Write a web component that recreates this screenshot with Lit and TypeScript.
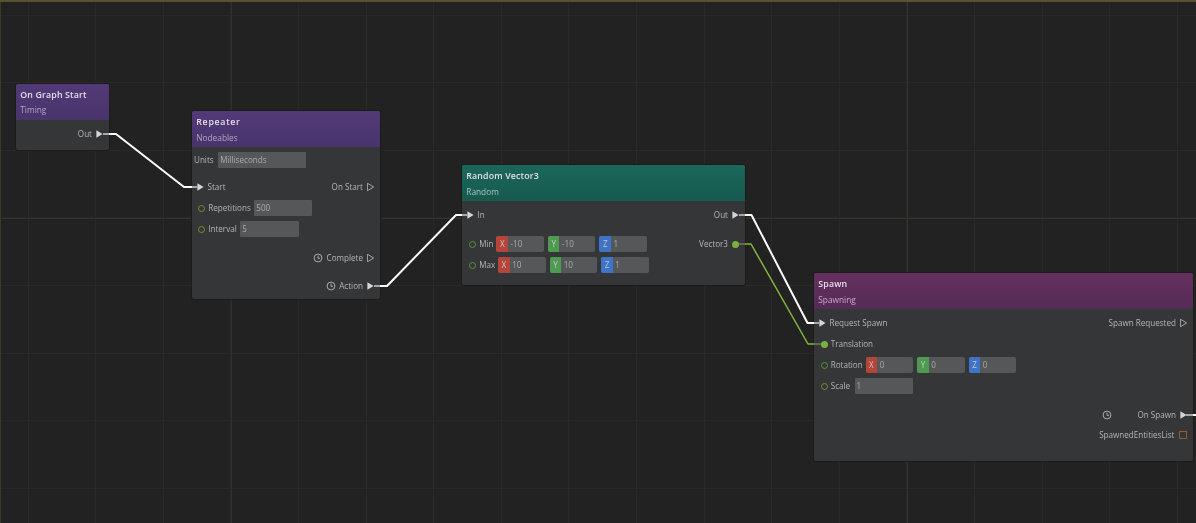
import { LitElement, html, css, svg } from "lit";

type Vec = { a: string; b: string; c: string };

const clock = html`<svg class="clock" viewBox="0 0 10 10"><circle cx="5" cy="5" r="3.9"></circle><path d="M5 2.7V5.3H7"></path></svg>`;
const tri = (filled: boolean) => html`<svg class="tri" viewBox="0 0 7 8"><path class=${filled ? "solid" : "hollow"} d="M.4 .2 6.6 4 .4 7.8Z"></path></svg>`;
const dot = (kind: string) => html`<span class="dot ${kind}"></span>`;
const field = (cls: string, value: string) => html`<span class="input ${cls}">${value}</span>`;
const vec = (v: Vec) => html`<span class="vec">
  <span class="comp"><b class="x">X</b><i>${v.a}</i></span>
  <span class="comp"><b class="y">Y</b><i>${v.b}</i></span>
  <span class="comp"><b class="z">Z</b><i>${v.c}</i></span>
</span>`;

class AppRoot extends LitElement {
  static styles = css`
    :host { display: block; width: 1196px; height: 523px; overflow: hidden; font-family: "Open Sans", "Noto Sans", sans-serif; }
    .canvas {
      position: relative; width: 1196px; height: 523px; overflow: hidden;
      background-color: #222222;
      background-image:
        linear-gradient(#57532c, #57532c),
        linear-gradient(#3c3b26, #3c3b26),
        linear-gradient(#2f302a, #2f302a),
        linear-gradient(#34342a, #34342a),
        linear-gradient(#34342a, #34342a),
        repeating-linear-gradient(90deg, transparent 0 27.6px, #292929 27.6px 28.6px, transparent 28.6px 67.6px),
        repeating-linear-gradient(180deg, transparent 0 14.6px, #292929 14.6px 15.6px, transparent 15.6px 67.6px);
      background-repeat: no-repeat, no-repeat, no-repeat, no-repeat, no-repeat, repeat, repeat;
      background-size: 100% 2px, 1px 100%, 1px 100%, 1px 100%, 100% 1px, auto, auto;
      background-position: 0 0, 0 0, 231px 0, 907px 0, 0 218px, 0 0, 0 0;
    }
    .node {
      position: absolute; box-sizing: border-box; display: flex; flex-direction: column;
      background: #343638; border-radius: 2px; box-shadow: 0 0 0 1px #1c1c1c;
      color: #b4b6b6; font-size: 8.1px; line-height: 12px;
    }
    .head { height: 36px; box-sizing: border-box; padding: 5px 4.3px 0; display: flex; flex-direction: column; gap: 4px; border-radius: 2px 2px 0 0; flex: none; }
    .n1 .head { gap: 3px; }
    .head strong { font-weight: 600; font-size: 8.8px; letter-spacing: .15px; line-height: 12px; color: #e4dfe8; white-space: nowrap; filter: blur(.25px); }
    .head strong.loose { letter-spacing: .7px; }
    .head small { font-size: 8.3px; line-height: 12px; white-space: nowrap; filter: blur(.25px); }
    .purple { background: linear-gradient(#523a78, #49346c); }
    .purple small { color: #b0a8c2; }
    .teal { background: linear-gradient(#1b675a, #16594f); }
    .teal small { color: #a8c4be; }
    .magenta { background: linear-gradient(#65305f, #552b56); }
    .magenta small { color: #c8aac4; }
    .body { flex: 1; display: flex; flex-direction: column; padding-top: 3.5px; filter: blur(.25px); }
    .row { height: 21px; display: flex; align-items: center; white-space: nowrap; flex: none; }
    .row.right { justify-content: flex-end; padding-right: 6px; }
    .row.left { padding-left: 5px; }
    .row.data { padding-left: 6px; }
    .row.plain { padding-left: 2px; }
    .row.gap { margin-top: 8px; }
    .row.gap7 { margin-top: 7px; }
    .row.small-gap { margin-top: 6px; }
    .row.tight { margin-top: -1px; }
    .row.split { justify-content: space-between; }
    .row.split > span { display: flex; align-items: center; }
    .label-l { margin-left: 3.5px; }
    .label-d { margin-left: 3.2px; }
    .label-r { margin-right: 4px; }
    .wide { margin-right: 22px; display: flex; }
    .units { margin-top: -1px; }
    .units .input { margin-left: 4.5px; }
    .dot { width: 5px; height: 5px; border-radius: 50%; border: 1px solid #86882c; flex: none; }
    .dot.green { border-color: #5f8f3a; }
    .dot.solid { width: 7px; height: 7px; border: 0; background: #7cb03e; }
    .dot.solid-r { width: 7px; height: 7px; border: 0; background: #7cb03e; margin-right: 0; }
    .tri { width: 7px; height: 8px; flex: none; }
    .solid { fill: #d6d6d6; }
    .hollow { fill: none; stroke: #b4b6b6; stroke-width: .9; }
    .clock { width: 10px; height: 10px; flex: none; margin-right: 3.5px; fill: none; stroke: #b8baba; stroke-width: .9; }
    .square { width: 6px; height: 6px; border: 1px solid #8f5c30; flex: none; margin-right: .5px; }
    .input { height: 16px; box-sizing: border-box; display: block; background: #565758; border-radius: 1px; color: #a9abab; padding: 2px 2px; line-height: 12px; margin-left: 3.5px; flex: none; }
    .n4 .input { margin-left: 4.5px; }
    .w88 { width: 88px; }
    .w58 { width: 58px; }
    .w59 { width: 59px; }
    .vec { display: flex; gap: 4px; margin-left: 3px; }
    .comp { width: 47.5px; height: 16px; display: flex; background: #565758; border-radius: 2px; overflow: hidden; flex: none; }
    .comp b { width: 11.5px; font-weight: 400; text-align: center; line-height: 16px; color: #c4c4c4; flex: none; }
    .comp i { font-style: normal; color: #a9abab; line-height: 16px; padding-left: 2.5px; }
    .x { background: #b5453a; }
    .y { background: #4d9a50; }
    .z { background: #3d74c8; }
    .wires { position: absolute; inset: 0; width: 1196px; height: 523px; pointer-events: none; }
    .wires path { fill: none; stroke-linejoin: round; }
    .white { stroke: #fbfbfb; stroke-width: 2; }
    .lime { stroke: #84b63c; stroke-width: 1.5; }
    .stub { stroke: #a6a8a8; stroke-width: 2; }
    .stub-g { stroke: #6f7f58; stroke-width: 1.5; }
    .n1 { left: 16px; top: 84px; width: 93px; height: 66px; }
    .n2 { left: 192px; top: 111px; width: 188px; height: 188px; }
    .n3 { left: 462px; top: 165px; width: 283px; height: 120px; }
    .n4 { left: 814px; top: 273px; width: 379px; height: 188px; }
    .n3 .row.data { padding-left: 7px; }
    .n4 .row.data { padding-left: 6.5px; }
  `;

  render() {
    return html`<div class="canvas">
      <section class="node n1">
        <header class="head purple"><strong>On Graph Start</strong><small>Timing</small></header>
        <div class="body"><div class="row right"><span class="label-r">Out</span>${tri(true)}</div></div>
      </section>

      <section class="node n2">
        <header class="head purple"><strong class="loose">Repeater</strong><small>Nodeables</small></header>
        <div class="body">
          <div class="row plain units"><span>Units</span>${field("w88", "Milliseconds")}</div>
          <div class="row left split right small-gap">
            <span>${tri(true)}<span class="label-l">Start</span></span>
            <span><span class="label-r">On Start</span>${tri(false)}</span>
          </div>
          <div class="row data">${dot("")}<span class="label-d">Repetitions</span>${field("w58", "500")}</div>
          <div class="row data">${dot("")}<span class="label-d">Interval</span>${field("w59", "5")}</div>
          <div class="row right gap">${clock}<span class="label-r">Complete</span>${tri(false)}</div>
          <div class="row right gap7">${clock}<span class="label-r">Action</span>${tri(true)}</div>
        </div>
      </section>

      <section class="node n3">
        <header class="head teal"><strong>Random Vector3</strong><small>Random</small></header>
        <div class="body">
          <div class="row left split right">
            <span>${tri(true)}<span class="label-l">In</span></span>
            <span><span class="label-r">Out</span>${tri(true)}</span>
          </div>
          <div class="row data split right gap">
            <span>${dot("green")}<span class="label-d">Min</span>${vec({ a: "-10", b: "-10", c: "1" })}</span>
            <span><span class="label-r">Vector3</span>${dot("solid-r")}</span>
          </div>
          <div class="row data">${dot("green")}<span class="label-d">Max</span>${vec({ a: "10", b: "10", c: "1" })}</div>
        </div>
      </section>

      <section class="node n4">
        <header class="head magenta"><strong>Spawn</strong><small>Spawning</small></header>
        <div class="body">
          <div class="row left split right">
            <span>${tri(true)}<span class="label-l">Request Spawn</span></span>
            <span><span class="label-r">Spawn Requested</span>${tri(false)}</span>
          </div>
          <div class="row data">${dot("solid")}<span class="label-d">Translation</span></div>
          <div class="row data">${dot("green")}<span class="label-d">Rotation</span>${vec({ a: "0", b: "0", c: "0" })}</div>
          <div class="row data">${dot("")}<span class="label-d">Scale</span>${field("w58", "1")}</div>
          <div class="row right gap"><span class="wide">${clock}</span><span class="label-r">On Spawn</span>${tri(true)}</div>
          <div class="row right tight"><span class="label-r">SpawnedEntitiesList</span><span class="square"></span></div>
        </div>
      </section>

      <svg class="wires" viewBox="0 0 1196 523">
        ${svg`
          <path class="white" d="M109 134H116L184 187H192"/>
          <path class="stub" d="M103 134H109M192 187H198"/>
          <path class="white" d="M380 286H387L456 215H462"/>
          <path class="stub" d="M374 286H380M462 215H468"/>
          <path class="white" d="M745 215H751.5L807.5 323H814"/>
          <path class="stub" d="M739 215H745M814 323H820"/>
          <path class="lime" d="M745 244H751L808 344H814"/>
          <path class="stub-g" d="M739 244H745M814 344H821"/>
          <path class="white" d="M1193 415H1196"/>
          <path class="stub" d="M1186 415H1193"/>
        `}
      </svg>
    </div>`;
  }
}
customElements.define("app-root", AppRoot);
